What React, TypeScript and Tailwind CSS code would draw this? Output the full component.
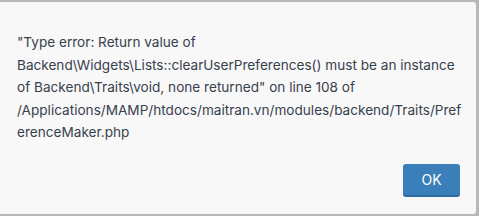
import React from "react";

export default function App() {
  const lines = [
    '"Type error: Return value of',
    "Backend\\Widgets\\Lists::clearUserPreferences() must be an instance",
    'of Backend\\Traits\\void, none returned" on line 108 of',
    "/Applications/MAMP/htdocs/maitran.vn/modules/backend/Traits/Pref",
    "erenceMaker.php",
  ];
  return (
    <div className="w-[479px] h-[216px] bg-[#b8b8b8] pt-[2px] pr-[3px] pb-[2px]">
      <div
        className="h-full bg-[#f8f8f8] rounded-r-[3px] flex flex-col pl-[17px] pr-[16px] pt-[29px] pb-[17px]"
        style={{ fontFamily: "Inter, 'Liberation Sans', sans-serif" }}
      >
        <div className="text-[13.6px] leading-[22.5px] text-[#37404d] flex-1">
          {lines.map((l, i) => (
            <div key={i} className="whitespace-nowrap">{l}</div>
          ))}
        </div>
        <div className="flex justify-end">
          <button className="w-[57px] h-[33px] rounded-[3px] bg-[#3a7fb9] border-b-2 border-[#2f6a9c] text-white text-[14px]">
            OK
          </button>
        </div>
      </div>
    </div>
  );
}
